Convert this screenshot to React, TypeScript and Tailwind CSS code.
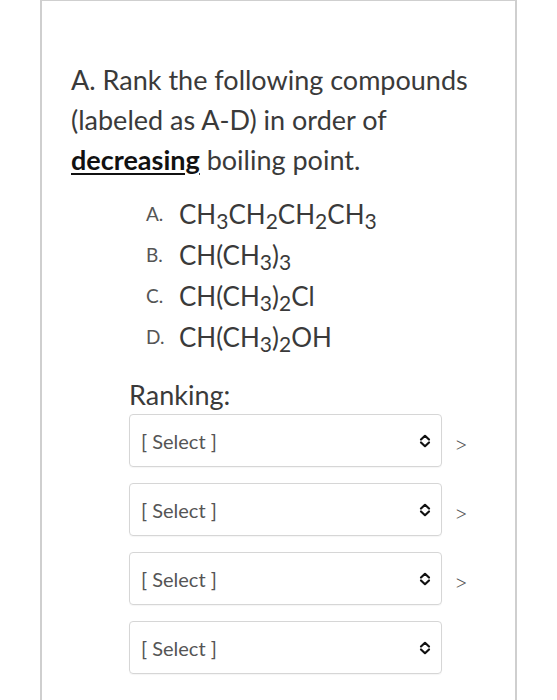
import React from "react";

const compounds: { label: string; parts: (string | [string])[] }[] = [
  { label: "A.", parts: ["CH", ["3"], "CH", ["2"], "CH", ["2"], "CH", ["3"]] },
  { label: "B.", parts: ["CH(CH", ["3"], ")", ["3"]] },
  { label: "C.", parts: ["CH(CH", ["3"], ")", ["2"], "Cl"] },
  { label: "D.", parts: ["CH(CH", ["3"], ")", ["2"], "OH"] },
];

function UpDown() {
  return (
    <svg width="12" height="14" viewBox="0 0 12 14" fill="none" stroke="#111" strokeWidth="2.2" strokeLinecap="round" strokeLinejoin="round">
      <path d="M2 5.5 L6 1.8 L10 5.5" />
      <path d="M2 8.5 L6 12.2 L10 8.5" />
    </svg>
  );
}

function RankSelect({ last }: { last?: boolean }) {
  return (
    <div className="flex items-center">
      <div className="w-[313px] h-[53px] border border-[#d6d6d6] rounded-[4px] flex items-center justify-between pl-[11px] pr-[10px] shadow-[0_1px_1px_rgba(0,0,0,0.04)]">
        <span className="text-[20px] text-[#555]">[ Select ]</span>
        <UpDown />
      </div>
      {!last && <span className="ml-[12px] mt-[6px] text-[24px] font-light text-[#555]">&gt;</span>}
    </div>
  );
}

export default function App() {
  return (
    <div className="min-h-screen bg-white" style={{ fontFamily: "Lato, 'Open Sans', sans-serif" }}>
      <div className="ml-[40px] w-[477px] min-h-[700px] border-x-2 border-t border-[#cfcfcf] pt-[59px] pl-[29px]">
        <p className="text-[27px] leading-[40px] text-[#3a3a3a]">
          A. Rank the following compounds
          <br />
          (labeled as A-D) in order of
          <br />
          <span className="font-bold text-[#111] underline underline-offset-[3px] decoration-[1.5px]">decreasing</span> boiling point.
        </p>

        <ul className="mt-[14px] ml-[75px]">
          {compounds.map((c) => (
            <li key={c.label} className="h-[41px] flex items-center">
              <span className="w-[33px] text-[19px] text-[#555]">{c.label}</span>
              <span className="text-[26px] text-[#3a3a3a]">
                {c.parts.map((p, i) =>
                  typeof p === "string" ? (
                    <span key={i}>{p}</span>
                  ) : (
                    <span key={i} className="text-[21px] relative top-[5px]">{p[0]}</span>
                  )
                )}
              </span>
            </li>
          ))}
        </ul>

        <div className="mt-[19px] ml-[58px] text-[27px] leading-[36px] text-[#3a3a3a]">Ranking:</div>

        <div className="mt-[1px] ml-[58px] flex flex-col gap-[16px]">
          <RankSelect />
          <RankSelect />
          <RankSelect />
          <RankSelect last />
        </div>
      </div>
    </div>
  );
}
